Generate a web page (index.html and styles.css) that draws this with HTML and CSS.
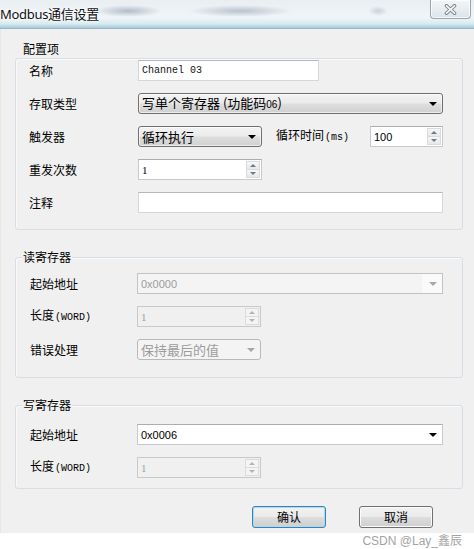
FILE: index.html
```html
<!DOCTYPE html>
<html lang="zh-CN">
<head>
<meta charset="utf-8">
<title>Modbus通信设置</title>
<link rel="stylesheet" href="styles.css">
</head>
<body>
<div class="window">
  <header class="titlebar">
    <h1 class="title">Modbus通信设置</h1>
    <button class="close" type="button" aria-label="关闭">
      <svg width="13" height="11" viewBox="0 0 13 11"><path d="M2.5 1.8 L10.5 9.2 M10.5 1.8 L2.5 9.2" stroke="#7a838d" stroke-width="3.6" stroke-linecap="round"/><path d="M2.5 1.8 L10.5 9.2 M10.5 1.8 L2.5 9.2" stroke="#f7f9fb" stroke-width="1.6" stroke-linecap="round"/></svg>
    </button>
  </header>

  <main class="dialog">
    <section class="group group--first">
      <h2 class="group-title">配置项</h2>
      <div class="group-box box-1">
        <div class="row">
          <span class="label">名称</span>
          <div class="field mono w-name">Channel 03</div>
        </div>
        <div class="row">
          <span class="label">存取类型</span>
          <div class="combo w-full"><span class="combo-text">写单个寄存器 (功能码<span class="small">06</span>)</span><span class="arrow"></span></div>
        </div>
        <div class="row">
          <span class="label">触发器</span>
          <div class="combo w-short"><span class="combo-text">循环执行</span><span class="arrow"></span></div>
          <span class="label-inline">循环时间<span class="mono-s">(ms)</span></span>
          <div class="spin w-full"><span class="spin-value">100</span><span class="spin-btns"><span class="spin-btn up"></span><span class="spin-btn down"></span></span></div>
        </div>
        <div class="row">
          <span class="label">重发次数</span>
          <div class="spin w-short"><span class="spin-value serif">1</span><span class="spin-btns"><span class="spin-btn up"></span><span class="spin-btn down"></span></span></div>
        </div>
        <div class="row">
          <span class="label">注释</span>
          <div class="field w-full"></div>
        </div>
      </div>
    </section>

    <section class="group">
      <h2 class="group-title">读寄存器</h2>
      <div class="group-box box-2">
        <div class="row">
          <span class="label">起始地址</span>
          <div class="ecombo is-disabled w-full"><span class="ecombo-text">0x0000</span><span class="ecombo-btn"><span class="arrow"></span></span></div>
        </div>
        <div class="row">
          <span class="label">长度<span class="mono-s">(WORD)</span></span>
          <div class="spin is-disabled w-short"><span class="spin-value serif">1</span><span class="spin-btns"><span class="spin-btn up"></span><span class="spin-btn down"></span></span></div>
        </div>
        <div class="row">
          <span class="label">错误处理</span>
          <div class="combo is-disabled w-short"><span class="combo-text">保持最后的值</span><span class="arrow"></span></div>
        </div>
      </div>
    </section>

    <section class="group">
      <h2 class="group-title">写寄存器</h2>
      <div class="group-box box-3">
        <div class="row">
          <span class="label">起始地址</span>
          <div class="ecombo w-full"><span class="ecombo-text">0x0006</span><span class="ecombo-btn"><span class="arrow"></span></span></div>
        </div>
        <div class="row">
          <span class="label">长度<span class="mono-s">(WORD)</span></span>
          <div class="spin is-disabled w-short"><span class="spin-value serif">1</span><span class="spin-btns"><span class="spin-btn up"></span><span class="spin-btn down"></span></span></div>
        </div>
      </div>
    </section>

    <div class="actions">
      <button class="btn btn--default" type="button">确认</button>
      <button class="btn" type="button">取消</button>
    </div>
  </main>

  <footer class="watermark">CSDN @Lay_鑫辰</footer>
</div>
</body>
</html>
```

FILE: styles.css
```css
* { box-sizing: border-box; }

html, body {
  margin: 0;
  padding: 0;
  background: #fff;
}

body {
  width: 474px;
  height: 549px;
  overflow: hidden;
  font-family: "Noto Sans CJK SC", "Liberation Sans", sans-serif;
  color: #000;
}

/* ---------- title bar ---------- */
.titlebar {
  height: 29px;
  display: flex;
  align-items: flex-start;
  background:
    radial-gradient(ellipse 34px 6px at 128px 11px, rgba(80, 100, 130, 0.38), transparent),
    radial-gradient(ellipse 52px 6px at 240px 11px, rgba(80, 100, 130, 0.34), transparent),
    radial-gradient(ellipse 10px 5px at 378px 11px, rgba(80, 100, 130, 0.24), transparent),
    linear-gradient(180deg, #e9eef2 0%, #f1f5f7 60%, #d6ebf1 82%, #a9cad8 96%, #8aa9b8 100%);
}

.title {
  margin: 6px 0 0 0;
  font-family: "Noto Sans", "Noto Sans CJK SC", sans-serif;
  font-size: 13px;
  font-weight: 400;
  line-height: 17px;
  letter-spacing: -0.3px;
  color: #111;
  text-shadow: 0 0 6px #fff, 0 0 3px #fff;
}

.close {
  margin: 0 3px 0 auto;
  width: 41px;
  height: 19px;
  padding: 0;
  border: 1px solid #9aa5b0;
  border-top: none;
  border-radius: 0 0 4px 4px;
  background: linear-gradient(180deg, #f3f6f8 0%, #e9edf1 50%, #dde3e8 100%);
  box-shadow: inset 0 0 0 1px rgba(255, 255, 255, 0.7);
  display: flex;
  align-items: center;
  justify-content: center;
}

/* ---------- dialog ---------- */
.dialog {
  background: #f0f0f0;
  height: 504px;
  padding: 12px 11px 0 14px;
  border-left: 1px solid #e6e6e6;
}

.group-title {
  position: relative;
  width: fit-content;
  margin: 19px 0 -8px 7px;
  padding: 0 1px;
  background: #f0f0f0;
  font-size: 12px;
  font-weight: 400;
  line-height: 16px;
  color: #000;
}

.group--first .group-title {
  margin-top: 0;
  margin-bottom: 1px;
}

.group-box {
  border: 1px solid #d5dfe5;
  border-radius: 3px;
  box-shadow: inset 1px 1px 0 #fafafa;
  padding-left: 13px;
  padding-right: 19px;
}

.box-1 { padding-top: 1px; padding-bottom: 16px; }
.box-2 { padding-top: 15px; padding-bottom: 17px; }
.box-3 { padding-top: 18px; padding-bottom: 10px; }

.box-2, .box-3 { padding-left: 14px; }

.row {
  display: flex;
  align-items: center;
  height: 21px;
}

.row + .row { margin-top: 12px; }

.label {
  flex: none;
  width: 109px;
  font-size: 12px;
  line-height: 16px;
}

.box-2 .label, .box-3 .label { width: 107px; }

.label-inline {
  flex: none;
  width: 94px;
  margin-left: 14px;
  font-size: 12px;
  line-height: 16px;
}

.mono-s {
  font-family: "Liberation Mono", monospace;
  font-size: 10px;
  margin-left: 1px;
}

.w-full { flex: 1; }
.w-short { flex: none; width: 124px; }
.w-name { flex: none; width: 181px; }

/* text field */
.field {
  height: 21px;
  border: 1px solid #d3d6db;
  border-top-color: #b5b8bd;
  background: #fff;
  padding: 0 3px;
  display: flex;
  align-items: center;
  font-size: 11px;
}

.mono {
  font-family: "Liberation Mono", monospace;
  font-size: 10px;
  color: #111;
}

/* drop-down list */
.combo {
  height: 21px;
  border: 1px solid #707070;
  border-radius: 3px;
  background: linear-gradient(180deg, #f3f3f3 0%, #ebebeb 48%, #dedede 52%, #d0d0d0 100%);
  box-shadow: inset 0 0 0 1px rgba(255, 255, 255, 0.6);
  display: flex;
  align-items: center;
  padding: 0 5px 0 3px;
  font-size: 13px;
  line-height: 17px;
}

.combo-text { white-space: nowrap; }

.small {
  font-family: "Liberation Sans", sans-serif;
  font-size: 10px;
}

.arrow {
  margin-left: auto;
  width: 0;
  height: 0;
  border-left: 4px solid transparent;
  border-right: 4px solid transparent;
  border-top: 4px solid #000;
}

.combo.is-disabled {
  border-color: #b9b9b9;
  background: #f4f4f4;
  box-shadow: none;
  color: #9c9c9c;
}

.combo.is-disabled .arrow { border-top-color: #a6a6a6; }

/* editable combo */
.ecombo {
  height: 21px;
  border: 1px solid #c6c9ce;
  border-top-color: #abadb3;
  background: #fff;
  display: flex;
  align-items: stretch;
  font-family: "Liberation Sans", sans-serif;
  font-size: 11px;
}

.ecombo-text {
  flex: 1;
  display: flex;
  align-items: center;
  padding-left: 3px;
}

.ecombo-btn {
  width: 20px;
  display: flex;
  align-items: center;
  padding-right: 5px;
}

.ecombo.is-disabled {
  border-color: #c3c3c3;
  background: #f4f4f4;
  color: #9c9c9c;
}

.ecombo.is-disabled .ecombo-btn { background: #fafafa; }
.ecombo.is-disabled .arrow { border-top-color: #a8a8a8; }

/* spin box */
.spin {
  height: 21px;
  border: 1px solid #c6c9ce;
  border-top-color: #abadb3;
  background: #fff;
  display: flex;
  padding: 1px;
  font-family: "Liberation Sans", sans-serif;
  font-size: 11px;
}

.spin-value {
  flex: 1;
  display: flex;
  align-items: center;
  padding-left: 2px;
}

.serif { font-family: "Liberation Serif", serif; font-size: 11px; }

.spin-btns {
  width: 14px;
  display: flex;
  flex-direction: column;
}

.spin-btn {
  flex: 1;
  border: 1px solid #d9dbde;
  background: linear-gradient(180deg, #f7f7f7, #e8e8e8);
  display: flex;
  align-items: center;
  justify-content: center;
}

.spin-btn + .spin-btn { border-top: none; }

.spin-btn::after {
  content: "";
  width: 0;
  height: 0;
  border-left: 3px solid transparent;
  border-right: 3px solid transparent;
}

.spin-btn.up::after { border-bottom: 3px solid #6b7b8c; }
.spin-btn.down::after { border-top: 3px solid #6b7b8c; }

.spin.is-disabled {
  border-color: #c9c9c9;
  background: #f0f0f0;
  color: #a0a0a0;
}

.spin.is-disabled .spin-btn { background: #f4f4f4; border-color: #dcdcdc; }
.spin.is-disabled .spin-btn.up::after { border-bottom-color: #b4b4b4; }
.spin.is-disabled .spin-btn.down::after { border-top-color: #b4b4b4; }

/* buttons */
.actions {
  display: flex;
  justify-content: flex-end;
  gap: 33px;
  margin-top: 17px;
  padding-right: 30px;
}

.btn {
  width: 74px;
  height: 22px;
  padding: 0;
  border: 1px solid #707070;
  border-radius: 3px;
  background: linear-gradient(180deg, #f2f2f2 0%, #ebebeb 48%, #dddddd 52%, #cfcfcf 100%);
  box-shadow: inset 0 0 0 1px #fbfbfb;
  font-family: "Noto Sans CJK SC", sans-serif;
  font-size: 12px;
  line-height: 16px;
  color: #000;
}

.btn--default {
  border-color: #3c7fb1;
  box-shadow: inset 0 0 0 1px #a6dcf6;
}

/* watermark */
.watermark {
  text-align: right;
  padding-right: 12px;
  font-family: "Liberation Sans", "Noto Sans CJK SC", sans-serif;
  font-size: 12px;
  line-height: 16px;
  color: #a3a3a3;
}
```
